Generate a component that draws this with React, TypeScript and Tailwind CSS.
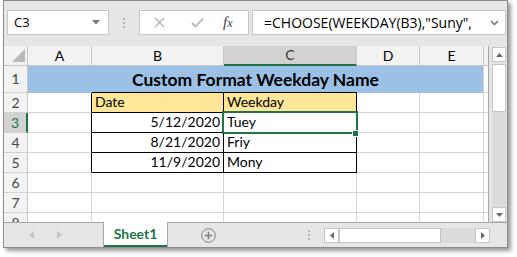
import React from "react";

const GRID = "#d4d4d4";
const HDR_LINE = "#c6c6c6";
const GREEN = "#217346";

const cellFont = { fontFamily: "Lato, 'Liberation Sans', sans-serif" };
const uiFont = { fontFamily: "'Open Sans', 'Noto Sans', sans-serif" };

const widths = [64, 132, 133, 63, 64];

function RowHeader({ n, h, selected }: { n: string; h: number; selected?: boolean }) {
  return (
    <div
      className={
        "w-[24px] shrink-0 flex items-center justify-center overflow-hidden box-border border-b border-b-[#d4d4d4] text-[14px] " +
        (selected
          ? "bg-[#d2d2d2] border-r-2 border-r-[#217346] text-[#217346]"
          : "bg-[#f3f3f3] border-r border-r-[#c6c6c6] text-[#444]")
      }
      style={{ height: h }}
    >
      <span className="leading-none">{n}</span>
    </div>
  );
}

type CellSpec = {
  text?: string;
  align?: "left" | "right";
  bg?: string;
  rightBlack?: boolean;
  bottomBlack?: boolean;
  selected?: boolean;
};

function Cell({ w, h, spec }: { w: number; h: number; spec: CellSpec }) {
  return (
    <div
      className={
        "relative shrink-0 box-border border-r border-b flex items-end pb-[1px] px-[3px] text-[14px] text-black leading-none " +
        (spec.align === "right" ? "justify-end" : "justify-start")
      }
      style={{
        width: w,
        height: h,
        background: spec.bg ?? "#ffffff",
        borderRightColor: spec.rightBlack ? "#000" : GRID,
        borderBottomColor: spec.bottomBlack ? "#000" : GRID,
      }}
    >
      <span className="pb-[2px]">{spec.text}</span>
      {spec.selected && (
        <div className="absolute left-[-2px] top-[-2px] w-[136px] h-[23px] border-2 border-[#217346] z-10 pointer-events-none">
          <div className="absolute left-[128px] top-[17px] w-[7px] h-[7px] bg-[#217346] border border-white" />
        </div>
      )}
    </div>
  );
}

function DataRow({ n, h, specs, selected }: { n: string; h: number; specs: CellSpec[]; selected?: boolean }) {
  return (
    <div className="flex">
      <RowHeader n={n} h={h} selected={selected} />
      {widths.map((w, i) => (
        <Cell key={i} w={w} h={h} spec={specs[i] ?? {}} />
      ))}
      <div className="w-[4px] shrink-0 box-border border-b border-b-[#d4d4d4] bg-white" style={{ height: h }} />
    </div>
  );
}

export default function App() {
  const yellow = "#ffe699";
  return (
    <div className="w-[517px] h-[257px] bg-white overflow-hidden" style={cellFont}>
      <div className="ml-[3px] w-[505px] h-[248px] box-border border border-[#8c8c8c] bg-[#e6e6e6] shadow-[3px_3px_4px_rgba(0,0,0,0.4)] flex flex-col">
        {/* Toolbar */}
        <div className="h-[45px] shrink-0 flex items-start pt-[9px]" style={uiFont}>
          <div className="ml-[3px] w-[102px] h-[25px] box-border bg-white border border-[#c6c6c6] flex items-center justify-between pl-[6px] pr-[8px]">
            <span className="text-[13px] text-black leading-none">C3</span>
            <svg width="8" height="5" viewBox="0 0 8 5">
              <path d="M0 0 H8 L4 4.5 Z" fill="#7a7a7a" />
            </svg>
          </div>
          <div className="ml-[14px] mt-[8px] flex flex-col gap-[2px]">
            <div className="w-[2px] h-[2px] bg-[#b3b3b3]" />
            <div className="w-[2px] h-[2px] bg-[#b3b3b3]" />
            <div className="w-[2px] h-[2px] bg-[#b3b3b3]" />
          </div>
          <div className="ml-[14px] w-[110px] h-[25px] box-border bg-white border border-[#c6c6c6] flex items-center">
            <svg className="ml-[14px]" width="11" height="11" viewBox="0 0 11 11">
              <path d="M1 1 L10 10 M10 1 L1 10" stroke="#b3b3b3" strokeWidth="1.3" />
            </svg>
            <svg className="ml-[26px]" width="13" height="11" viewBox="0 0 13 11">
              <path d="M1 6 L4.5 9.5 L12 1.5" stroke="#b3b3b3" strokeWidth="1.8" fill="none" />
            </svg>
            <span
              className="ml-[19px] text-[15px] italic text-[#444] leading-none"
              style={{ fontFamily: "'Liberation Serif', serif" }}
            >
              f<span className="text-[12px]">x</span>
            </span>
          </div>
          <div className="ml-[3px] w-[254px] h-[25px] box-border bg-white border border-[#c6c6c6] flex items-center justify-between pl-[11px] pr-[6px]">
            <span className="text-[14px] text-black leading-none whitespace-nowrap">=CHOOSE(WEEKDAY(B3),"Suny",</span>
            <svg width="9" height="6" viewBox="0 0 9 6">
              <path d="M1 1 L4.5 4.5 L8 1" stroke="#7a7a7a" strokeWidth="1.6" fill="none" />
            </svg>
          </div>
        </div>

        {/* Grid + vertical scrollbar */}
        <div className="h-[177px] shrink-0 flex box-border border-b border-b-[#a6a6a6]">
          <div className="w-[485px] shrink-0 box-border border-r border-r-[#a6a6a6] bg-white overflow-hidden">
            {/* column header */}
            <div className="flex h-[20px]">
              <div className="w-[24px] h-[20px] shrink-0 box-border border-r border-b border-[#c6c6c6] bg-[#f3f3f3] relative">
                <svg className="absolute left-[8px] top-[3px]" width="13" height="13" viewBox="0 0 13 13">
                  <path d="M0 13 H13 V0 Z" fill="#b9b9b9" />
                </svg>
              </div>
              {["A", "B", "C", "D", "E"].map((l, i) => (
                <div
                  key={l}
                  className={
                    "h-[20px] shrink-0 box-border border-r border-r-[#c6c6c6] flex items-center justify-center text-[14px] leading-none " +
                    (l === "C"
                      ? "bg-[#d2d2d2] border-b-2 border-b-[#217346] text-[#333]"
                      : "bg-[#f3f3f3] border-b border-b-[#c6c6c6] text-black")
                  }
                  style={{ width: widths[i] }}
                >
                  {l}
                </div>
              ))}
              <div className="w-[4px] h-[20px] shrink-0 box-border border-b border-b-[#c6c6c6] bg-[#f3f3f3]" />
            </div>

            {/* row 1 */}
            <div className="flex">
              <RowHeader n="1" h={27} />
              <div className="w-[456px] h-[27px] shrink-0 box-border border-r border-r-[#d4d4d4] bg-[#9bc2e6] flex flex-col">
                <div className="flex-1 flex items-center justify-center pt-[2px]">
                  <span className="text-[17.5px] font-bold text-black leading-none">Custom Format Weekday Name</span>
                </div>
                <div className="flex h-[1px]">
                  <div className="w-[64px] bg-[#9bc2e6]" />
                  <div className="w-[265px] bg-black" />
                  <div className="flex-1 bg-[#9bc2e6]" />
                </div>
              </div>
              <div className="w-[4px] h-[27px] shrink-0 box-border border-b border-b-[#d4d4d4] bg-white" />
            </div>

            <DataRow
              n="2"
              h={20}
              specs={[
                { rightBlack: true },
                { text: "Date", bg: yellow, rightBlack: true, bottomBlack: true },
                { text: "Weekday", bg: yellow, rightBlack: true, bottomBlack: true },
              ]}
            />
            <DataRow
              n="3"
              h={20}
              selected
              specs={[
                { rightBlack: true },
                { text: "5/12/2020", align: "right", rightBlack: true, bottomBlack: true },
                { text: "Tuey", rightBlack: true, bottomBlack: true, selected: true },
              ]}
            />
            <DataRow
              n="4"
              h={20}
              specs={[
                { rightBlack: true },
                { text: "8/21/2020", align: "right", rightBlack: true, bottomBlack: true },
                { text: "Friy", rightBlack: true, bottomBlack: true },
              ]}
            />
            <DataRow
              n="5"
              h={20}
              specs={[
                { rightBlack: true },
                { text: "11/9/2020", align: "right", rightBlack: true, bottomBlack: true },
                { text: "Mony", rightBlack: true, bottomBlack: true },
              ]}
            />
            <DataRow n="6" h={20} specs={[]} />
            <DataRow n="7" h={20} specs={[]} />
            <div className="flex h-[9px] overflow-hidden">
              <div className="w-[24px] h-[20px] shrink-0 box-border border-r border-r-[#c6c6c6] bg-[#f3f3f3] flex items-center justify-center text-[14px] text-[#444]">
                <span className="leading-none">8</span>
              </div>
              {widths.map((w, i) => (
                <div key={i} className="h-[20px] shrink-0 box-border border-r border-r-[#d4d4d4] bg-white" style={{ width: w }} />
              ))}
              <div className="w-[4px] h-[20px] bg-white" />
            </div>
          </div>

          {/* vertical scrollbar */}
          <div className="flex-1 flex flex-col pl-[3px] pr-[1px] pt-[1px]">
            <div className="w-[14px] h-[15px] box-border bg-white border border-[#c6c6c6] flex items-center justify-center">
              <svg width="7" height="4" viewBox="0 0 7 4">
                <path d="M0 4 H7 L3.5 0 Z" fill="#6a6a6a" />
              </svg>
            </div>
            <div className="mt-[2px] w-[14px] h-[48px] box-border bg-white border border-[#c6c6c6]" />
            <div className="flex-1 bg-[#dcdcdc] w-[14px]" />
            <div className="w-[14px] h-[15px] box-border bg-white border border-[#c6c6c6] flex items-center justify-center">
              <svg width="7" height="4" viewBox="0 0 7 4">
                <path d="M0 0 H7 L3.5 4 Z" fill="#6a6a6a" />
              </svg>
            </div>
          </div>
        </div>

        {/* Bottom bar */}
        <div className="flex-1 flex items-stretch">
          <div className="w-[99px] shrink-0 flex items-center pl-[25px]">
            <svg width="5" height="8" viewBox="0 0 5 8">
              <path d="M5 0 V8 L0 4 Z" fill="#c4c4c4" />
            </svg>
            <svg className="ml-[23px]" width="5" height="8" viewBox="0 0 5 8">
              <path d="M0 0 V8 L5 4 Z" fill="#c4c4c4" />
            </svg>
          </div>
          <div className="w-[65px] shrink-0 box-border border-l border-r border-[#a6a6a6] bg-white flex flex-col mt-[-1px]">
            <div className="flex-1 flex items-center justify-center">
              <span className="text-[14px] font-bold text-[#217346] leading-none">Sheet1</span>
            </div>
            <div className="h-[2px] bg-[#217346]" />
          </div>
          <div className="flex items-center ml-[33px]">
            <svg width="15" height="15" viewBox="0 0 15 15">
              <circle cx="7.5" cy="7.5" r="6.8" stroke="#7f7f7f" strokeWidth="1" fill="none" />
              <path d="M7.5 3.8 V11.2 M3.8 7.5 H11.2" stroke="#7f7f7f" strokeWidth="1.6" />
            </svg>
          </div>
          <div className="ml-[92px] flex flex-col justify-center gap-[2px]">
            <div className="w-[2px] h-[2px] bg-[#b3b3b3]" />
            <div className="w-[2px] h-[2px] bg-[#b3b3b3]" />
            <div className="w-[2px] h-[2px] bg-[#b3b3b3]" />
          </div>
          <div className="ml-[14px] flex items-center">
            <div className="w-[15px] h-[15px] box-border bg-white border border-[#c6c6c6] flex items-center justify-center">
              <svg width="4" height="7" viewBox="0 0 4 7">
                <path d="M4 0 V7 L0 3.5 Z" fill="#6a6a6a" />
              </svg>
            </div>
            <div className="w-[102px] h-[15px] box-border bg-white border border-[#c6c6c6]" />
            <div className="w-[34px] h-[15px] bg-[#dcdcdc]" />
            <div className="w-[15px] h-[15px] box-border bg-white border border-[#c6c6c6] flex items-center justify-center">
              <svg width="4" height="7" viewBox="0 0 4 7">
                <path d="M0 0 V7 L4 3.5 Z" fill="#6a6a6a" />
              </svg>
            </div>
          </div>
        </div>
      </div>
    </div>
  );
}
